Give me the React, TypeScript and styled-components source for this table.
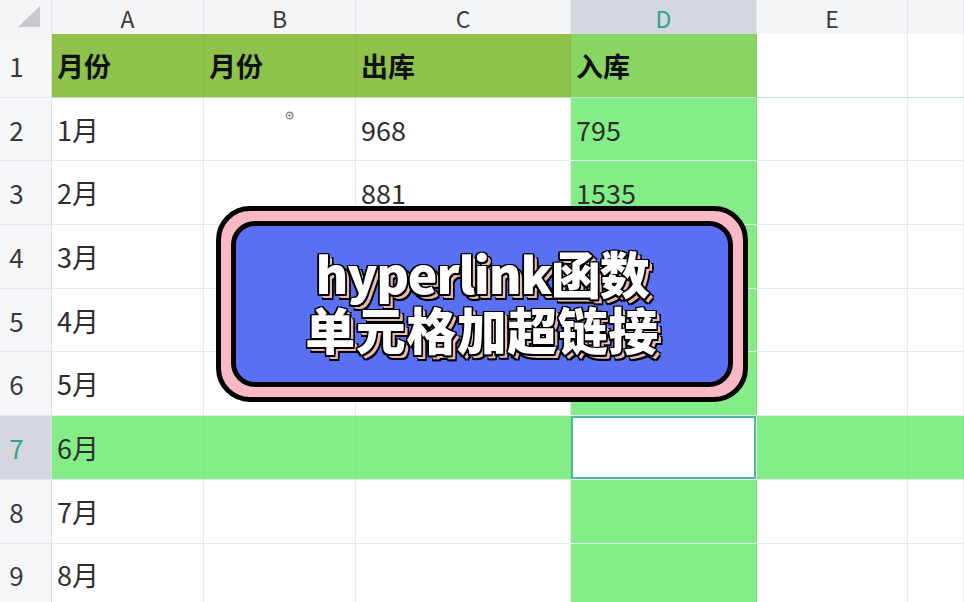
import React from "react";
import styled, { createGlobalStyle } from "styled-components";

const Global = createGlobalStyle`
  html, body { margin: 0; padding: 0; background: #fff; overflow: hidden; }
  body { font-family: "Noto Sans CJK SC", "Noto Sans", sans-serif; }
  * { box-sizing: border-box; }
`;

const Page = styled.div`
  position: relative;
  width: 964px;
  height: 602px;
  overflow: hidden;
  background: #fff;
`;

const Sheet = styled.div`
  display: grid;
  grid-template-columns: 52px 152px 152px 215px 186px 151px 56px;
  grid-template-rows: 34px repeat(9, 63.7px);
`;

const Corner = styled.div`
  background: #f4f5f7;
  border-right: 1px solid #e2e4e8;
  display: flex;
  align-items: center;
  padding-left: 17px;
`;

const ColHead = styled.div<{ $active?: boolean }>`
  background: ${(p) => (p.$active ? "#d4d7dd" : "#f4f5f7")};
  color: ${(p) => (p.$active ? "#2fa58a" : "#3a3a3a")};
  border-right: 1px solid #e6e7ea;
  display: flex;
  align-items: center;
  justify-content: center;
  font-size: 23px;
  font-weight: 400;
  padding-top: 1px;
`;

const RowHead = styled.div<{ $active?: boolean }>`
  background: ${(p) => (p.$active ? "#d4d7dd" : "#f5f6f8")};
  color: ${(p) => (p.$active ? "#2fa58a" : "#3a3a3a")};
  border-right: 1px solid #dfe1e5;
  border-bottom: 1px solid #e6e7ea;
  display: flex;
  align-items: center;
  justify-content: center;
  padding-right: 18px;
  font-size: 26px;
`;

const Cell = styled.div<{ $bg?: string; $bold?: boolean; $line?: string; $selected?: boolean }>`
  position: relative;
  background: ${(p) => p.$bg || "#fff"};
  border-right: 1px solid ${(p) => (p.$bg ? "rgba(0,0,0,0.03)" : "#e8e9ec")};
  border-bottom: 1px solid ${(p) => p.$line || "#e8e9ec"};
  ${(p) => (p.$selected ? "box-shadow: inset 0 0 0 2px #4fb89f;" : "")}
  display: flex;
  align-items: center;
  padding-left: 5px;
  font-size: 27px;
  font-weight: ${(p) => (p.$bold ? 700 : 400)};
  color: ${(p) => (p.$bold ? "#111" : "#2e2e2e")};
  white-space: nowrap;
`;

const CornerMark = styled.svg`
  display: block;
`;

const Pointer = styled.svg`
  position: absolute;
  left: 81px;
  top: 13px;
`;

const Banner = styled.div`
  position: absolute;
  left: 216px;
  top: 206px;
  width: 532px;
  height: 196px;
  border: 5px solid #000;
  border-radius: 34px;
  background: #f8b8c4;
  padding: 10px;
  display: flex;
`;

const BannerInner = styled.div`
  flex: 1;
  border: 5px solid #000;
  border-radius: 24px;
  background: #5a70f2;
  display: flex;
  flex-direction: column;
  align-items: center;
  justify-content: center;
  padding-bottom: 8px;
`;

const BannerLine = styled.div<{ $tight?: boolean }>`
  font-family: "Noto Sans CJK SC", "Noto Sans", sans-serif;
  font-size: 50px;
  font-weight: 900;
  line-height: 56px;
  color: #fff;
  letter-spacing: ${(p) => (p.$tight ? "-1.2px" : "0.5px")};
  text-shadow:
    -1.5px -1.5px 0 #000,
    1.5px -1.5px 0 #000,
    -1.5px 1.5px 0 #000,
    1.5px 1.5px 0 #000,
    0 -1.5px 0 #000,
    0 1.5px 0 #000,
    -1.5px 0 0 #000,
    1.5px 0 0 #000,
    3px 3px 0 #e8b8b4,
    4px 4px 0 #e8b8b4,
    5.5px 5.5px 0 #000,
    5.5px 3px 0 #000,
    3px 5.5px 0 #000;
`;

const GREEN_HEAD = "#8fc24b";
const GREEN_HEAD_D = "#88d563";
const GREEN = "#83ed87";

const rows: string[][] = [
  ["月份", "月份", "出库", "入库", "", ""],
  ["1月", "", "968", "795", "", ""],
  ["2月", "", "881", "1535", "", ""],
  ["3月", "", "", "", "", ""],
  ["4月", "", "", "", "", ""],
  ["5月", "", "", "", "", ""],
  ["6月", "", "", "", "", ""],
  ["7月", "", "", "", "", ""],
  ["8月", "", "", "", "", ""],
];

const cols = ["A", "B", "C", "D", "E", ""];

function cellBg(r: number, c: number): string | undefined {
  if (r === 0) {
    if (c < 3) return GREEN_HEAD;
    if (c === 3) return GREEN_HEAD_D;
    return undefined;
  }
  if (r === 6) return c === 3 ? undefined : GREEN;
  if (c === 3) return GREEN;
  return undefined;
}

export default function App() {
  return (
    <Page>
      <Global />
      <Sheet>
        <Corner>
          <CornerMark width="24" height="24" viewBox="0 0 24 24">
            <polygon points="1,22 23,22 23,1" fill="#c9cacd" />
          </CornerMark>
        </Corner>
        {cols.map((c, i) => (
          <ColHead key={i} $active={c === "D"}>
            {c}
          </ColHead>
        ))}
        {rows.map((row, r) => (
          <React.Fragment key={r}>
            <RowHead $active={r === 6}>{r + 1}</RowHead>
            {row.map((v, c) => (
              <Cell
                key={c}
                $bg={cellBg(r, c)}
                $bold={r === 0}
                $line={r === 0 ? "#b5e3cf" : undefined}
                $selected={r === 6 && c === 3}
              >
                {v}
                {r === 1 && c === 1 && (
                  <Pointer width="9" height="9" viewBox="0 0 9 9">
                    <circle cx="4.5" cy="4.5" r="3.3" fill="#fff" stroke="#8a8a8a" strokeWidth="1.4" />
                    <path d="M4.5 2.8v3.4M2.8 4.5h3.4" stroke="#8a8a8a" strokeWidth="0.9" />
                  </Pointer>
                )}
              </Cell>
            ))}
          </React.Fragment>
        ))}
      </Sheet>
      <Banner>
        <BannerInner>
          <BannerLine $tight>hyperlink函数</BannerLine>
          <BannerLine>单元格加超链接</BannerLine>
        </BannerInner>
      </Banner>
    </Page>
  );
}
